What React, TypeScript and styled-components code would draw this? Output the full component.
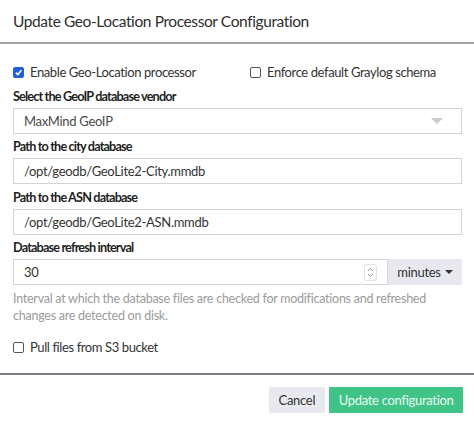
import React from 'react';
import styled, { createGlobalStyle } from 'styled-components';

const GlobalStyle = createGlobalStyle`
  body {
    margin: 0;
    background: #fff;
    font-family: Lato, "Noto Sans", sans-serif;
    color: #333;
  }
`;

const Modal = styled.div`
  width: 474px;
  height: 424px;
  display: flex;
  flex-direction: column;
  background: #fff;
`;

const Header = styled.div`
  height: 44px;
  padding: 0 13px 1px;
  display: flex;
  align-items: center;
  border-bottom: 2px solid #a3a3a3;
  box-sizing: border-box;
`;

const Title = styled.h3`
  margin: 0;
  font-size: 15.5px;
  letter-spacing: -0.4px;
  font-weight: 400;
  color: #2e2e2e;
`;

const Body = styled.div`
  height: 331px;
  box-sizing: border-box;
  padding: 19px 12px 0 13px;
  display: flex;
  flex-direction: column;
  border-bottom: 2px solid #7d7d85;
`;

const CheckRow = styled.div`
  display: grid;
  grid-template-columns: 237px 1fr;
`;

const CheckLabel = styled.label`
  display: flex;
  align-items: center;
  gap: 6px;
  font-size: 13px;
  letter-spacing: -0.4px;
  color: #333;
  height: 18px;
`;

const Box = styled.span<{ $checked?: boolean }>`
  width: 11px;
  height: 11px;
  border-radius: 2px;
  box-sizing: border-box;
  border: 1px solid ${(p) => (p.$checked ? '#2160d8' : '#555')};
  background: ${(p) => (p.$checked ? '#2160d8' : '#fff')};
  display: flex;
  align-items: center;
  justify-content: center;
  flex-shrink: 0;
`;

const Field = styled.div<{ $gap?: number }>`
  margin-top: ${(p) => p.$gap ?? 0}px;
  display: flex;
  flex-direction: column;
`;

const FieldLabel = styled.div`
  font-size: 12.7px;
  font-weight: 700;
  letter-spacing: -0.85px;
  color: #1e1e1e;
  height: 18px;
  line-height: 18px;
  margin-bottom: 3px;
`;

const Input = styled.div`
  height: 26px;
  box-sizing: border-box;
  border: 1px solid #d4d4d8;
  padding: 0 10px;
  display: flex;
  align-items: center;
  font-size: 13px;
  letter-spacing: -0.3px;
  color: #333;
`;

const SelectBox = styled(Input)`
  justify-content: space-between;
  color: #4a4a4a;
`;

const Caret = styled.span`
  width: 0;
  height: 0;
  border-left: 6px solid transparent;
  border-right: 6px solid transparent;
  border-top: 6px solid #c7cad3;
  margin-right: 8px;
`;

const Group = styled.div`
  display: flex;
  height: 26px;
`;

const NumberInput = styled(Input)`
  flex: 1;
  justify-content: space-between;
  padding-right: 10px;
`;

const Spinner = styled.span`
  width: 13px;
  height: 17px;
  border: 1px solid #e2e2e6;
  border-radius: 3px;
  display: flex;
  align-items: center;
  justify-content: center;
  box-sizing: border-box;
`;

const AddonButton = styled.div`
  width: 74px;
  background: #e8e9ef;
  display: flex;
  align-items: center;
  justify-content: center;
  gap: 4px;
  font-size: 13px;
  letter-spacing: -0.3px;
  color: #333;
`;

const SmallCaret = styled.span`
  width: 0;
  height: 0;
  border-left: 4px solid transparent;
  border-right: 4px solid transparent;
  border-top: 4px solid #333;
`;

const Help = styled.p`
  margin: 4.5px 0 0;
  font-size: 12.5px;
  letter-spacing: -0.25px;
  line-height: 17px;
  color: #9b9b9b;
`;

const Footer = styled.div`
  height: 49px;
  padding: 0 11px;
  display: flex;
  justify-content: flex-end;
  align-items: center;
  gap: 4px;
`;

const Button = styled.button<{ $primary?: boolean }>`
  height: 26px;
  border: none;
  padding: 0 ${(p) => (p.$primary ? 9.5 : 10)}px;
  font-family: inherit;
  font-size: 13px;
  letter-spacing: -0.3px;
  background: ${(p) => (p.$primary ? '#3fc386' : '#e8e9ef')};
  color: ${(p) => (p.$primary ? '#eafbf2' : '#333')};
`;

const Check = () => (
  <svg width="9" height="9" viewBox="0 0 10 10">
    <path d="M2 5.2 L4.2 7.4 L8.2 2.6" fill="none" stroke="#fff" strokeWidth="1.8" />
  </svg>
);

export default function App() {
  return (
    <>
      <GlobalStyle />
      <Modal>
        <Header>
          <Title>Update Geo-Location Processor Configuration</Title>
        </Header>
        <Body>
          <CheckRow>
            <CheckLabel>
              <Box $checked>
                <Check />
              </Box>
              Enable Geo-Location processor
            </CheckLabel>
            <CheckLabel>
              <Box />
              Enforce default Graylog schema
            </CheckLabel>
          </CheckRow>
          <Field $gap={5.5}>
            <FieldLabel>Select the GeoIP database vendor</FieldLabel>
            <SelectBox>
              MaxMind GeoIP
              <Caret />
            </SelectBox>
          </Field>
          <Field $gap={3.5}>
            <FieldLabel>Path to the city database</FieldLabel>
            <Input>/opt/geodb/GeoLite2-City.mmdb</Input>
          </Field>
          <Field $gap={3.5}>
            <FieldLabel>Path to the ASN database</FieldLabel>
            <Input>/opt/geodb/GeoLite2-ASN.mmdb</Input>
          </Field>
          <Field $gap={3.5}>
            <FieldLabel>Database refresh interval</FieldLabel>
            <Group>
              <NumberInput>
                30
                <Spinner>
                  <svg width="7" height="11" viewBox="0 0 7 11">
                    <path d="M1 4 L3.5 1.5 L6 4 M1 7 L3.5 9.5 L6 7" fill="none" stroke="#999" strokeWidth="1" />
                  </svg>
                </Spinner>
              </NumberInput>
              <AddonButton>
                minutes
                <SmallCaret />
              </AddonButton>
            </Group>
            <Help>
              Interval at which the database files are checked for modifications and refreshed changes are detected on disk.
            </Help>
          </Field>
          <Field $gap={14.5}>
            <CheckLabel>
              <Box />
              Pull files from S3 bucket
            </CheckLabel>
          </Field>
        </Body>
        <Footer>
          <Button>Cancel</Button>
          <Button $primary>Update configuration</Button>
        </Footer>
      </Modal>
    </>
  );
}
